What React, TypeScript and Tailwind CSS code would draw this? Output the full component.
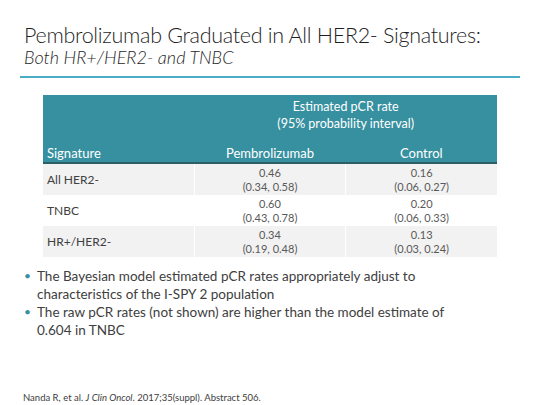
const rows = [
  { sig: 'All HER2-', pem: ['0.46', '(0.34, 0.58)'], ctl: ['0.16', '(0.06, 0.27)'], shade: true },
  { sig: 'TNBC', pem: ['0.60', '(0.43, 0.78)'], ctl: ['0.20', '(0.06, 0.33)'], shade: false },
  { sig: 'HR+/HER2-', pem: ['0.34', '(0.19, 0.48)'], ctl: ['0.13', '(0.03, 0.24)'], shade: true },
];

const bullets = [
  'The Bayesian model estimated pCR rates appropriately adjust to characteristics of the I-SPY 2 population',
  'The raw pCR rates (not shown) are higher than the model estimate of 0.604 in TNBC',
];

export default function App() {
  return (
    <div className="w-[540px] h-[405px] bg-white flex flex-col font-['Lato',sans-serif] text-[#404040] overflow-hidden">
      {/* title */}
      <div className="pl-[24px] pt-[23px]">
        <h1 className="text-[21.5px] leading-[24px] tracking-[-0.3px] font-light whitespace-nowrap text-[#1f1f1f]">
          Pembrolizumab Graduated in All HER2- Signatures:
        </h1>
        <p className="text-[18px] leading-[20px] italic font-light text-[#1f1f1f]">Both HR+/HER2- and TNBC</p>
      </div>
      <div className="mx-[20px] mt-[9px] h-[2px] bg-[#4bacc6]" />

      {/* table */}
      <div className="ml-[43px] w-[454px] mt-[17px]">
        <div className="bg-[#37909f] text-white border-b-2 border-[#2d5f67]">
          <div className="grid grid-cols-3 pt-[3px]">
            <div />
            <div className="col-span-2 text-center text-[12.5px] leading-[17px]">
              <div>Estimated pCR rate</div>
              <div>(95% probability interval)</div>
            </div>
          </div>
          <div className="grid grid-cols-3 text-[13px] leading-[17px] pt-[13px]">
            <div className="pl-[4px]">Signature</div>
            <div className="text-center">Pembrolizumab</div>
            <div className="text-center">Control</div>
          </div>
        </div>
        {rows.map((r) => (
          <div key={r.sig} className="grid grid-cols-3 gap-x-[1px] h-[31px]">
            <div className={`flex items-center pl-[4px] text-[12px] ${r.shade ? 'bg-[#f2f2f2]' : ''}`}>{r.sig}</div>
            <div className={`flex flex-col justify-center text-center text-[11px] leading-[14px] text-[#595959] ${r.shade ? 'bg-[#f2f2f2]' : ''}`}>
              <span>{r.pem[0]}</span>
              <span>{r.pem[1]}</span>
            </div>
            <div className={`flex flex-col justify-center text-center text-[11px] leading-[14px] text-[#595959] ${r.shade ? 'bg-[#f2f2f2]' : ''}`}>
              <span>{r.ctl[0]}</span>
              <span>{r.ctl[1]}</span>
            </div>
          </div>
        ))}
      </div>

      {/* bullets */}
      <ul className="mt-[10px] ml-[24px] w-[440px] flex flex-col text-[13.5px] leading-[18px]">
        {bullets.map((b) => (
          <li key={b} className="flex">
            <span className="w-[13px] shrink-0 text-[#37909f] text-[12px]">•</span>
            <span>{b}</span>
          </li>
        ))}
      </ul>

      <p className="mt-auto mb-[1px] ml-[23px] text-[9.5px] leading-[12px] text-[#404040]">
        Nanda R, et al. <i>J Clin Oncol</i>. 2017;35(suppl). Abstract 506.
      </p>
    </div>
  );
}
